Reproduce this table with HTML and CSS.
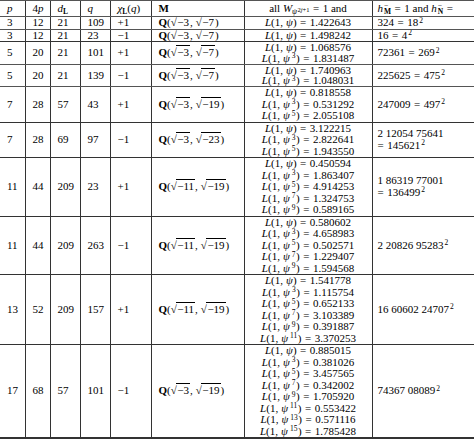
FILE: index.html
```html
<!DOCTYPE html>
<html>
<head>
<meta charset="utf-8">
<link rel="stylesheet" href="styles.css">
</head>
<body>
<table class="tbl">
<colgroup>
<col class="w1"><col class="w2"><col class="w3"><col class="w4"><col class="w5"><col class="w6"><col class="w7"><col class="w8">
</colgroup>
<thead>
<tr>
<th><i>p</i></th>
<th>4<i>p</i></th>
<th><i>d</i><sub class="bs">L</sub></th>
<th><i>q</i></th>
<th><i>χ</i><sub class="bs">L</sub>(<i>q</i>)</th>
<th><b>M</b></th>
<th class="ctr">all <i>W</i><sub class="sb2"><i>ψ</i><sup class="ss2">2<i>j</i>+1</sup></sub><span class="eq">=</span>1 and</th>
<th class="last"><i>h</i><span class="ssb"><span class="up">−</span><span class="dn">M</span></span><span class="eq">=</span>1 and <i>h</i><span class="ssb"><span class="up">−</span><span class="dn">N</span></span><span class="eq">=</span></th>
</tr>
</thead>
<tbody>
<tr>
<td>3</td><td>12</td><td>21</td><td>109</td><td>+1</td>
<td><b>Q</b>(<span class="rad">√<span class="rc">−3</span></span>,<span class="rad sp">√<span class="rc">−7</span></span>)</td>
<td class="ctr"><div><i>L</i>(1,<i class="sp">ψ</i>)<span class="eq">=</span>1.422643</div></td>
<td class="last">324<span class="eq">=</span>18<sup>2</sup></td>
</tr>
<tr class="thick">
<td>3</td><td>12</td><td>21</td><td>23</td><td>−1</td>
<td><b>Q</b>(<span class="rad">√<span class="rc">−3</span></span>,<span class="rad sp">√<span class="rc">−7</span></span>)</td>
<td class="ctr"><div><i>L</i>(1,<i class="sp">ψ</i>)<span class="eq">=</span>1.498242</div></td>
<td class="last">16<span class="eq">=</span>4<sup>2</sup></td>
</tr>
<tr class="tight">
<td>5</td><td>20</td><td>21</td><td>101</td><td>+1</td>
<td><b>Q</b>(<span class="rad">√<span class="rc">−3</span></span>,<span class="rad sp">√<span class="rc">−7</span></span>)</td>
<td class="ctr"><div><i>L</i>(1,<i class="sp">ψ</i>)<span class="eq">=</span>1.068576</div><div><i>L</i>(1,<i class="sp">ψ</i><sup class="ps">3</sup>)<span class="eq">=</span>1.831487</div></td>
<td class="last">72361<span class="eq">=</span>269<sup>2</sup></td>
</tr>
<tr class="tight">
<td>5</td><td>20</td><td>21</td><td>139</td><td>−1</td>
<td><b>Q</b>(<span class="rad">√<span class="rc">−3</span></span>,<span class="rad sp">√<span class="rc">−7</span></span>)</td>
<td class="ctr"><div><i>L</i>(1,<i class="sp">ψ</i>)<span class="eq">=</span>1.740963</div><div><i>L</i>(1,<i class="sp">ψ</i><sup class="ps">3</sup>)<span class="eq">=</span>1.048031</div></td>
<td class="last">225625<span class="eq">=</span>475<sup>2</sup></td>
</tr>
<tr class="thick">
<td>7</td><td>28</td><td>57</td><td>43</td><td>+1</td>
<td><b>Q</b>(<span class="rad">√<span class="rc">−3</span></span>,<span class="rad sp">√<span class="rc">−19</span></span>)</td>
<td class="ctr"><div><i>L</i>(1,<i class="sp">ψ</i>)<span class="eq">=</span>0.818558</div><div><i>L</i>(1,<i class="sp">ψ</i><sup class="ps">3</sup>)<span class="eq">=</span>0.531292</div><div><i>L</i>(1,<i class="sp">ψ</i><sup class="ps">5</sup>)<span class="eq">=</span>2.055108</div></td>
<td class="last">247009<span class="eq">=</span>497<sup>2</sup></td>
</tr>
<tr class="thick">
<td>7</td><td>28</td><td>69</td><td>97</td><td>−1</td>
<td><b>Q</b>(<span class="rad">√<span class="rc">−3</span></span>,<span class="rad sp">√<span class="rc">−23</span></span>)</td>
<td class="ctr"><div><i>L</i>(1,<i class="sp">ψ</i>)<span class="eq">=</span>3.122215</div><div><i>L</i>(1,<i class="sp">ψ</i><sup class="ps">3</sup>)<span class="eq">=</span>2.822641</div><div><i>L</i>(1,<i class="sp">ψ</i><sup class="ps">5</sup>)<span class="eq">=</span>1.943550</div></td>
<td class="last"><div class="ind">2 12054 75641</div><div class="ind">=<span class="sp2">145621<sup>2</sup></span></div></td>
</tr>
<tr class="thick">
<td>11</td><td>44</td><td>209</td><td>23</td><td>+1</td>
<td><b>Q</b>(<span class="rad">√<span class="rc">−11</span></span>,<span class="rad sp">√<span class="rc">−19</span></span>)</td>
<td class="ctr"><div><i>L</i>(1,<i class="sp">ψ</i>)<span class="eq">=</span>0.450594</div><div><i>L</i>(1,<i class="sp">ψ</i><sup class="ps">3</sup>)<span class="eq">=</span>1.863407</div><div><i>L</i>(1,<i class="sp">ψ</i><sup class="ps">5</sup>)<span class="eq">=</span>4.914253</div><div><i>L</i>(1,<i class="sp">ψ</i><sup class="ps">7</sup>)<span class="eq">=</span>1.324753</div><div><i>L</i>(1,<i class="sp">ψ</i><sup class="ps">9</sup>)<span class="eq">=</span>0.589165</div></td>
<td class="last"><div class="ind">1 86319 77001</div><div class="ind">=<span class="sp2">136499<sup>2</sup></span></div></td>
</tr>
<tr class="thick">
<td>11</td><td>44</td><td>209</td><td>263</td><td>−1</td>
<td><b>Q</b>(<span class="rad">√<span class="rc">−11</span></span>,<span class="rad sp">√<span class="rc">−19</span></span>)</td>
<td class="ctr"><div><i>L</i>(1,<i class="sp">ψ</i>)<span class="eq">=</span>0.580602</div><div><i>L</i>(1,<i class="sp">ψ</i><sup class="ps">3</sup>)<span class="eq">=</span>4.658983</div><div><i>L</i>(1,<i class="sp">ψ</i><sup class="ps">5</sup>)<span class="eq">=</span>0.502571</div><div><i>L</i>(1,<i class="sp">ψ</i><sup class="ps">7</sup>)<span class="eq">=</span>1.229407</div><div><i>L</i>(1,<i class="sp">ψ</i><sup class="ps">9</sup>)<span class="eq">=</span>1.594568</div></td>
<td class="last">2 20826 95283<sup>2</sup></td>
</tr>
<tr class="thick">
<td>13</td><td>52</td><td>209</td><td>157</td><td>+1</td>
<td><b>Q</b>(<span class="rad">√<span class="rc">−11</span></span>,<span class="rad sp">√<span class="rc">−19</span></span>)</td>
<td class="ctr"><div><i>L</i>(1,<i class="sp">ψ</i>)<span class="eq">=</span>1.541778</div><div><i>L</i>(1,<i class="sp">ψ</i><sup class="ps">3</sup>)<span class="eq">=</span>1.115754</div><div><i>L</i>(1,<i class="sp">ψ</i><sup class="ps">5</sup>)<span class="eq">=</span>0.652133</div><div><i>L</i>(1,<i class="sp">ψ</i><sup class="ps">7</sup>)<span class="eq">=</span>3.103389</div><div><i>L</i>(1,<i class="sp">ψ</i><sup class="ps">9</sup>)<span class="eq">=</span>0.391887</div><div><i>L</i>(1,<i class="sp">ψ</i><sup class="ps">11</sup>)<span class="eq">=</span>3.370253</div></td>
<td class="last">16 60602 24707<sup>2</sup></td>
</tr>
<tr class="end">
<td>17</td><td>68</td><td>57</td><td>101</td><td>−1</td>
<td><b>Q</b>(<span class="rad">√<span class="rc">−3</span></span>,<span class="rad sp">√<span class="rc">−19</span></span>)</td>
<td class="ctr"><div><i>L</i>(1,<i class="sp">ψ</i>)<span class="eq">=</span>0.885015</div><div><i>L</i>(1,<i class="sp">ψ</i><sup class="ps">3</sup>)<span class="eq">=</span>0.381026</div><div><i>L</i>(1,<i class="sp">ψ</i><sup class="ps">5</sup>)<span class="eq">=</span>3.457565</div><div><i>L</i>(1,<i class="sp">ψ</i><sup class="ps">7</sup>)<span class="eq">=</span>0.342002</div><div><i>L</i>(1,<i class="sp">ψ</i><sup class="ps">9</sup>)<span class="eq">=</span>1.705920</div><div><i>L</i>(1,<i class="sp">ψ</i><sup class="ps">11</sup>)<span class="eq">=</span>0.553422</div><div><i>L</i>(1,<i class="sp">ψ</i><sup class="ps">13</sup>)<span class="eq">=</span>0.571116</div><div><i>L</i>(1,<i class="sp">ψ</i><sup class="ps">15</sup>)<span class="eq">=</span>1.785428</div></td>
<td class="last">74367 08089<sup>2</sup></td>
</tr>
</tbody>
</table>
</body>
</html>
```

FILE: styles.css
```css
html, body {
  margin: 0;
  padding: 0;
  background: #ffffff;
  overflow: hidden;
}

.tbl {
  border-collapse: collapse;
  table-layout: fixed;
  width: 474px;
  font-family: "Liberation Serif", "DejaVu Serif", serif;
  font-size: 11px;
  line-height: 11.5px;
  color: #000000;
}

.w1 { width: 25px; }
.w2 { width: 25px; }
.w3 { width: 30px; }
.w4 { width: 30px; }
.w5 { width: 41px; }
.w6 { width: 93px; }
.w7 { width: 128px; }
.w8 { width: 102px; }

.tbl th,
.tbl td {
  padding: 0 0 0 7px;
  text-align: left;
  vertical-align: middle;
  white-space: nowrap;
  overflow: hidden;
  border-left: 1px solid #333333;
  border-bottom: 1px solid #555555;
}

.tbl th {
  font-weight: normal;
  height: 15px;
  border-top: 1px solid #555555;
}

.tbl th:first-child,
.tbl td:first-child {
  border-left: none;
}

.tbl .last {
  padding-left: 5px;
}

.tbl .ctr {
  text-align: center;
  padding-left: 0;
}

.tbl tr.tight td {
  line-height: 10.8px;
}

.tbl tr.thick td {
  border-bottom: 1px solid #333333;
}

.tbl tr.end td {
  border-bottom: 2px solid #333333;
}

sup, sub {
  font-size: 7.5px;
  line-height: 0;
}

sup {
  vertical-align: 3.5px;
  margin-left: 1px;
}

sup.ps {
  margin-left: 2px;
  margin-right: 0.5px;
}

sub {
  vertical-align: -2px;
}

.bs {
  font-weight: bold;
}

.sb2 {
  font-size: 8px;
  vertical-align: -2.5px;
}

.ss2 {
  font-size: 6.5px;
  vertical-align: 2.5px;
  margin-left: 0.5px;
}

.ssb {
  display: inline-flex;
  flex-direction: column;
  vertical-align: 4px;
  font-size: 7.5px;
  line-height: 6px;
  margin-left: 1px;
}

.ssb .dn {
  font-weight: bold;
}

.eq {
  margin: 0 3.5px;
}

.sp {
  margin-left: 3px;
}

.sp2 {
  margin-left: 3.5px;
}

.rad {
  white-space: nowrap;
}

.rc {
  border-top: 1px solid #000000;
  margin-left: -0.5px;
  padding: 0 1px;
}

.ind {
  text-align: left;
}
```
